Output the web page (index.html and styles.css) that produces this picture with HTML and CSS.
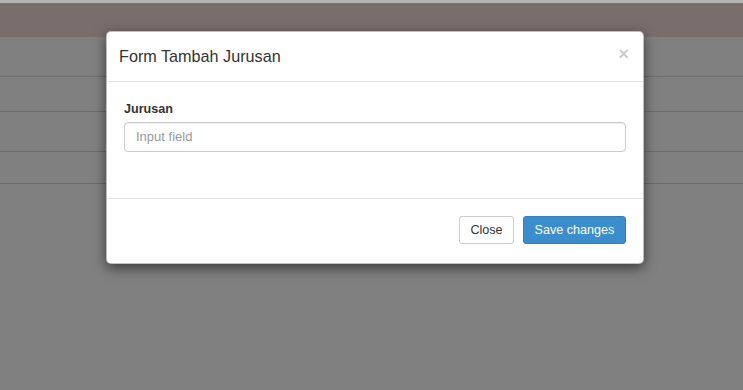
FILE: index.html
```html
<!DOCTYPE html>
<html>
<head>
<meta charset="utf-8">
<link rel="stylesheet" href="styles.css">
</head>
<body>
<div class="page">
  <div class="topstrip"></div>
  <div class="band"></div>
  <div class="rows">
    <div class="row r1"></div>
    <div class="row r2"></div>
    <div class="row r3"></div>
    <div class="row r4"></div>
  </div>
</div>
<div class="modal">
  <div class="modal-header">
    <h4 class="modal-title">Form Tambah Jurusan</h4>
    <span class="close">×</span>
  </div>
  <div class="modal-body">
    <label class="label">Jurusan</label>
    <div class="input">Input field</div>
  </div>
  <div class="modal-footer">
    <button class="btn btn-default">Close</button>
    <button class="btn btn-primary">Save changes</button>
  </div>
</div>
</body>
</html>
```
FILE: styles.css
```css
html, body {
  margin: 0;
  padding: 0;
}
body {
  width: 743px;
  height: 390px;
  overflow: hidden;
  background: #808080;
  font-family: "Liberation Sans", Arial, sans-serif;
  color: #333;
  position: relative;
}
.page {
  display: flex;
  flex-direction: column;
}
.topstrip {
  height: 3px;
  background: #b4b4b4;
}
.band {
  height: 34px;
  background: #7a6e6d;
}
.rows {
  display: flex;
  flex-direction: column;
}
.row {
  border-bottom: 1px solid #6c6c6c;
}
.r1 { height: 39px; }
.r2 { height: 34px; }
.r3 { height: 39px; }
.r4 { height: 31px; border-bottom-color: #7c6264; }

.modal {
  position: absolute;
  left: 106px;
  top: 31px;
  width: 536px;
  background: #fff;
  border: 1px solid rgba(0, 0, 0, 0.25);
  border-radius: 5px;
  box-shadow: 0 4px 13px rgba(0, 0, 0, 0.55);
}
.modal-header {
  display: flex;
  align-items: flex-start;
  justify-content: space-between;
  padding: 13px 14px 13px 12px;
  border-bottom: 1px solid #e5e5e5;
}
.modal-title {
  margin: 0;
  font-size: 16.2px;
  line-height: 23px;
  font-weight: normal;
  color: #333;
}
.close {
  font-size: 18.5px;
  font-weight: bold;
  line-height: 16px;
  color: #000;
  opacity: 0.2;
  margin-top: 1px;
}
.modal-body {
  padding: 18px 17px 46px 17px;
  display: flex;
  flex-direction: column;
}
.label {
  font-weight: bold;
  font-size: 12.6px;
  line-height: 18px;
  margin-bottom: 4px;
}
.input {
  height: 30px;
  box-sizing: border-box;
  border: 1px solid #ccc;
  border-radius: 4px;
  padding: 0 11px;
  font-size: 13px;
  line-height: 28px;
  color: #999;
  box-shadow: inset 0 1px 1px rgba(0, 0, 0, 0.075);
}
.modal-footer {
  display: flex;
  justify-content: flex-end;
  gap: 9px;
  padding: 17px 17px 19px 17px;
  border-top: 1px solid #e5e5e5;
}
.btn {
  font-family: "Liberation Sans", Arial, sans-serif;
  font-size: 12.6px;
  height: 28px;
  box-sizing: border-box;
  border-radius: 3px;
  border: 1px solid transparent;
  padding: 0;
  line-height: 26px;
  margin: 0;
  white-space: nowrap;
  text-align: center;
}
.btn-default {
  background: #fff;
  color: #333;
  border-color: #ccc;
  width: 55px;
}
.btn-primary {
  background: #3c8dcc;
  color: #fff;
  border-color: #367fbb;
  width: 103px;
}
```
